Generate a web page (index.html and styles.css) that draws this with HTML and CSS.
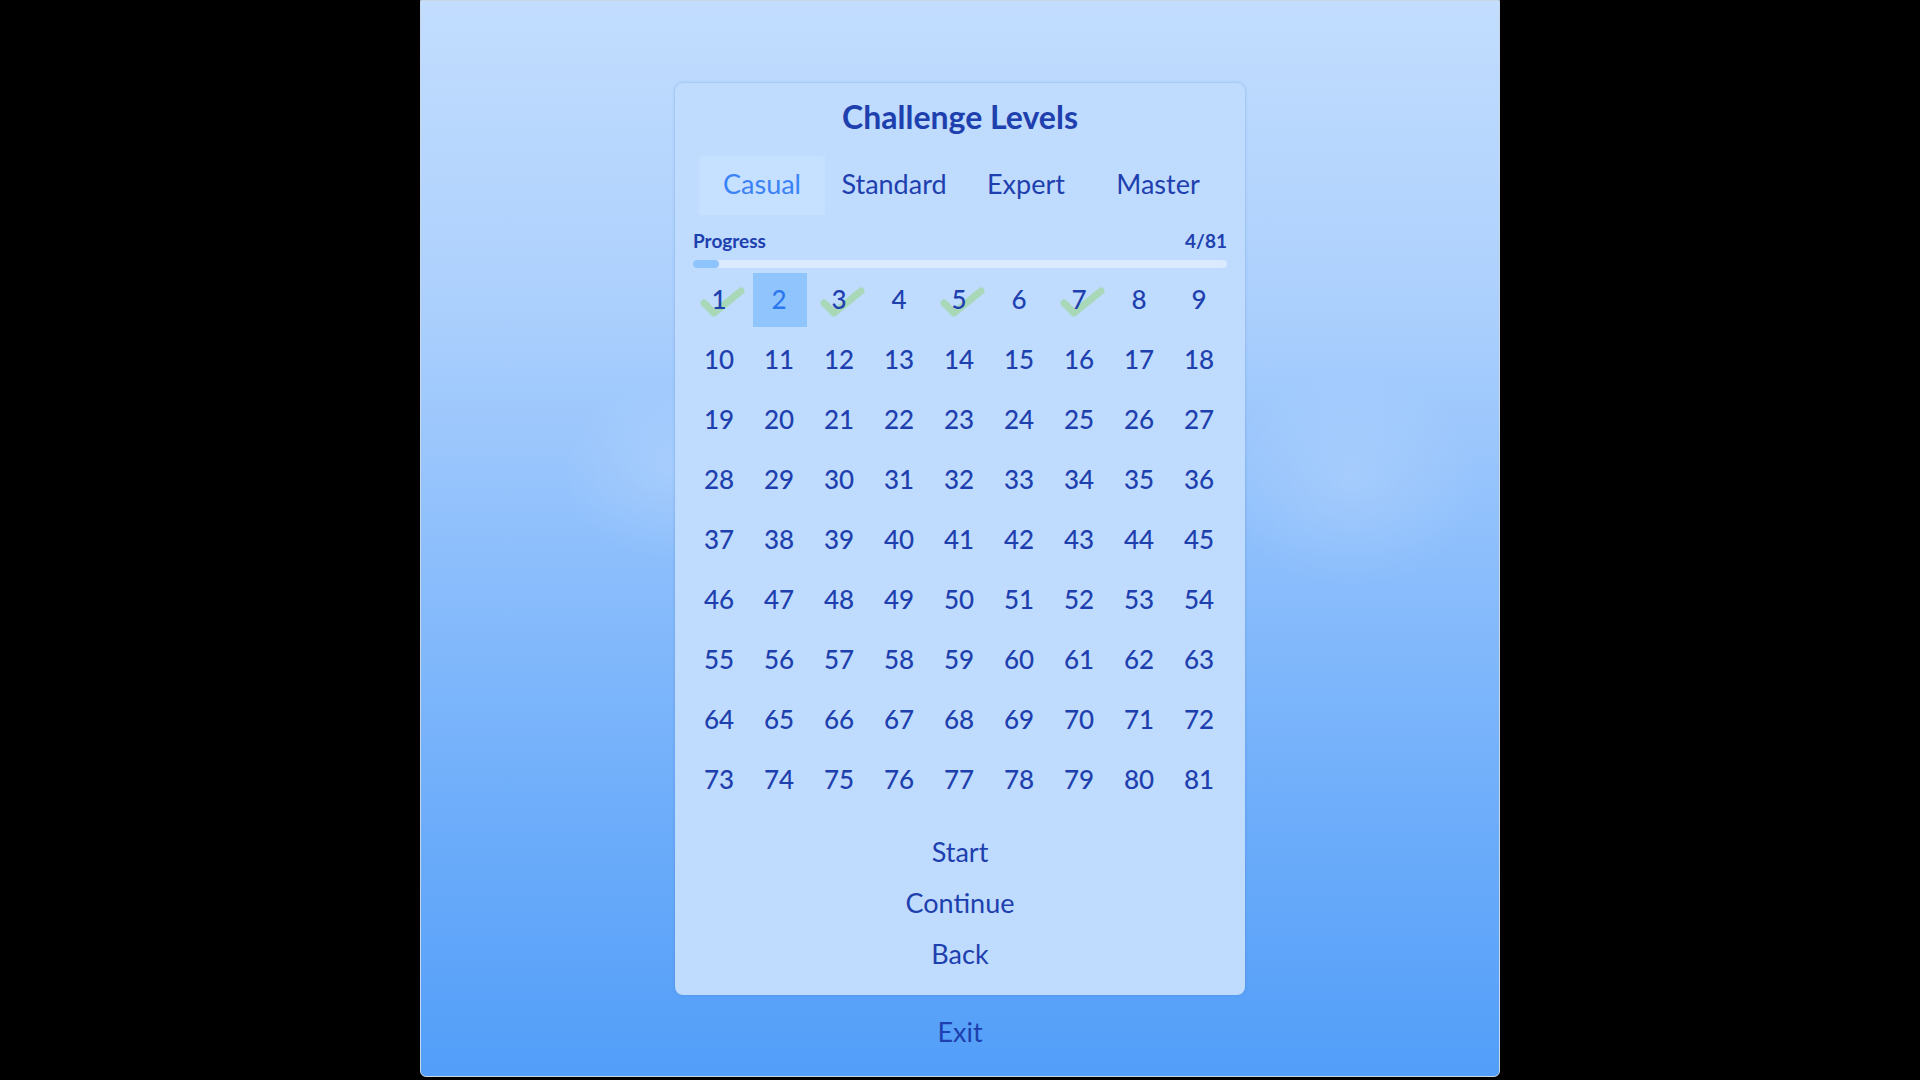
FILE: index.html
```html
<!DOCTYPE html>
<html>
<head>
<meta charset="utf-8">
<link rel="stylesheet" href="styles.css">
</head>
<body>
<div class="stage">
  <div class="game">
    <div class="cloud cloud-left"></div>
    <div class="cloud cloud-right"></div>
    <div class="card">
      <h1 class="title">Challenge Levels</h1>
      <div class="tabs">
        <div class="tab active">Casual</div>
        <div class="tab">Standard</div>
        <div class="tab">Expert</div>
        <div class="tab">Master</div>
      </div>
      <div class="progress">
        <div class="progress-head"><span>Progress</span><span>4/81</span></div>
        <div class="track"><div class="fill" style="width:26px"></div></div>
      </div>
      <div class="grid" id="grid"></div>
      <div class="menu">
        <div class="menu-item">Start</div>
        <div class="menu-item">Continue</div>
        <div class="menu-item">Back</div>
      </div>
    </div>
    <div class="exit">Exit</div>
  </div>
</div>
<script>
  var g = document.getElementById('grid');
  var done = [1,3,5,7];
  var check = '<svg class="check" viewBox="0 0 54 54"><path d="M11 30 L21 40 L48 18" /></svg>';
  for (var i = 1; i <= 81; i++) {
    var c = document.createElement('div');
    c.className = 'cell' + (i === 2 ? ' selected' : '');
    c.innerHTML = (done.indexOf(i) >= 0 ? check : '') + '<span class="num">' + i + '</span>';
    g.appendChild(c);
  }
</script>
</body>
</html>
```
FILE: styles.css
```css
html, body {
  margin: 0;
  padding: 0;
  background: #000;
  width: 1920px;
  height: 1080px;
  overflow: hidden;
}
.stage {
  display: flex;
  justify-content: center;
  height: 1080px;
}
.game {
  position: relative;
  width: 1080px;
  height: 1077px;
  box-sizing: border-box;
  border: 1px solid #c9d6e6;
  border-radius: 0 0 6px 6px;
  background: linear-gradient(180deg, #c2ddfe 0%, #acd0fd 28%, #8cbefc 52%, #6dadfa 76%, #529ef9 100%);
  display: flex;
  flex-direction: column;
  align-items: center;
  font-family: "Lato", "Open Sans", sans-serif;
  overflow: hidden;
}
.cloud {
  position: absolute;
  border-radius: 50%;
  background: radial-gradient(ellipse at center, rgba(255,255,255,0.14) 0%, rgba(255,255,255,0) 70%);
}
.cloud-left { left: 140px; top: 380px; width: 220px; height: 180px; }
.cloud-right { left: 800px; top: 370px; width: 260px; height: 220px; }
.card {
  position: relative;
  margin-top: 82px;
  width: 570px;
  height: 912px;
  box-sizing: border-box;
  background: #bfdbfe;
  border-radius: 8px;
  box-shadow: 0 0 3px rgba(50, 100, 180, 0.35);
  padding: 16px 18px 0;
  display: flex;
  flex-direction: column;
}
.title {
  margin: 0;
  text-align: center;
  font-size: 32px;
  font-weight: 700;
  line-height: 36px;
  color: #1e40af;
}
.tabs {
  margin: 21px 6px 0;
  display: grid;
  grid-template-columns: repeat(4, 1fr);
  column-gap: 6px;
}
.tab {
  height: 59px;
  box-sizing: border-box;
  padding-bottom: 5px;
  display: flex;
  align-items: center;
  justify-content: center;
  font-size: 27px;
  color: #1e40af;
}
.tab.active {
  background: #c6e0ff;
  color: #3b82f6;
  border-radius: 2px;
}
.progress {
  margin-top: 14px;
}
.progress-head {
  display: flex;
  justify-content: space-between;
  font-size: 19px;
  font-weight: 700;
  line-height: 24px;
  color: #1e40af;
}
.track {
  margin-top: 7px;
  height: 8px;
  border-radius: 4px;
  background: #dbeafe;
}
.fill {
  height: 8px;
  border-radius: 4px;
  background: #8ec4fd;
}
.grid {
  margin-top: 5px;
  display: grid;
  grid-template-columns: repeat(9, 54px);
  grid-auto-rows: 54px;
  gap: 6px;
}
.cell {
  position: relative;
  display: flex;
  align-items: center;
  justify-content: center;
  box-sizing: border-box;
  padding: 0 2px 3px 0;
  font-size: 26px;
  font-weight: 500;
  color: #1e40af;
}
.cell.selected {
  background: #90c4fd;
  color: #2b78ee;
}
.check {
  position: absolute;
  left: 0;
  top: 0;
  width: 54px;
  height: 54px;
}
.check path {
  fill: none;
  stroke: rgba(160, 215, 160, 0.75);
  stroke-width: 7;
  stroke-linecap: round;
  stroke-linejoin: round;
}
.num {
  position: relative;
}
.menu {
  margin-top: 19px;
  display: flex;
  flex-direction: column;
  align-items: center;
}
.menu-item {
  font-size: 27px;
  line-height: 51px;
  color: #1e40af;
}
.exit {
  margin-top: 18px;
  font-size: 27px;
  line-height: 38px;
  color: #1e40af;
}
```
